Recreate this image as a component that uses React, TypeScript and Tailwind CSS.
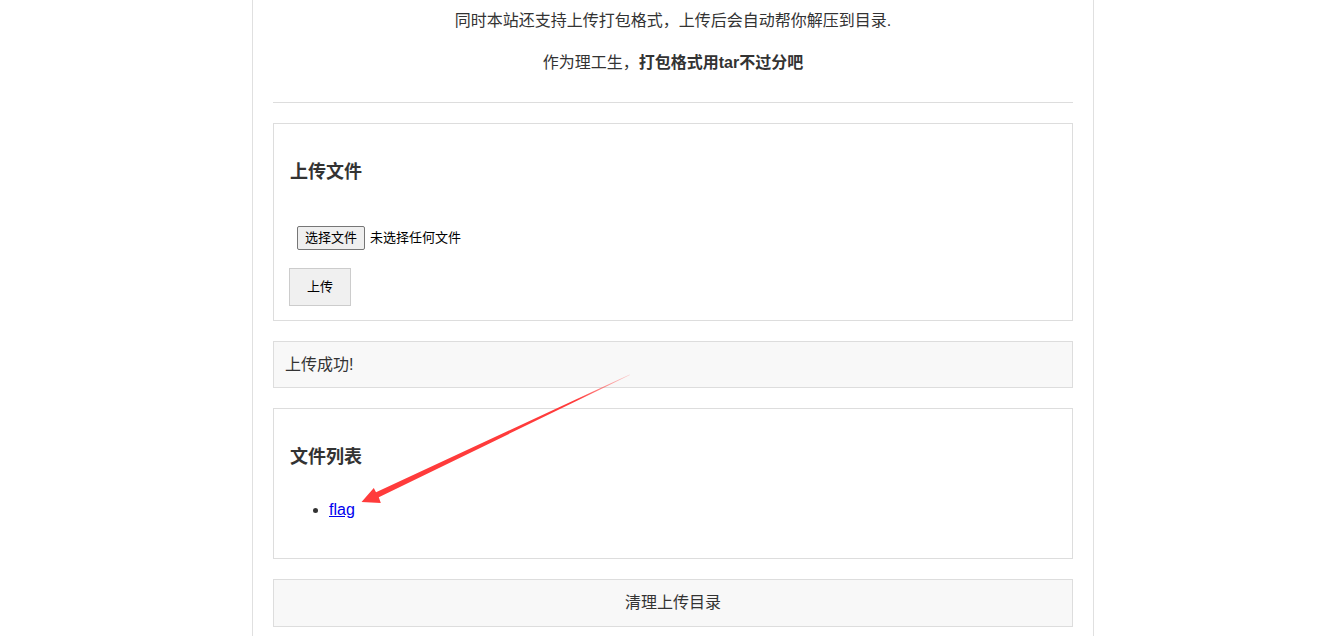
import React from "react";

const font = { fontFamily: '"Liberation Sans", "Noto Sans CJK SC", sans-serif' };

export default function App() {
  return (
    <div className="relative min-h-[636px] bg-white text-[#333]" style={font}>
      <div className="ml-[252px] w-[842px] min-h-[636px] border-x border-[#e0e0e0] px-5 pt-2 pb-5">
        <p className="text-center text-[16px] leading-[26px] mb-4">
          同时本站还支持上传打包格式，上传后会自动帮你解压到目录.
        </p>
        <p className="text-center text-[16px] leading-[26px]">
          作为理工生，<b>打包格式用tar不过分吧</b>
        </p>
        <hr className="mt-[26px] border-t border-[#ddd]" />

        <div className="mt-5 border border-[#ddd] px-4 pt-4 pb-[14px]">
          <h3 className="mt-[19px] text-[18px] leading-[26px] font-bold">上传文件</h3>
          <div className="mt-[41px] ml-[7px] flex items-center h-[24px]">
            <span className="h-[24px] px-[7px] flex items-center border border-[#767676] rounded-[2px] bg-[#efefef] text-[13px] text-black">
              选择文件
            </span>
            <span className="ml-[5px] text-[13px] text-black">未选择任何文件</span>
          </div>
          <div className="mt-[18px] -ml-px w-[62px] h-[38px] flex items-center justify-center border border-[#ccc] bg-[#f0f0f0] text-[13px] text-black">
            上传
          </div>
        </div>

        <div className="mt-5 border border-[#ddd] bg-[#f8f8f8] pl-[11px] pr-3 py-[10px] text-[16px] leading-[25px]">
          上传成功!
        </div>

        <div className="mt-5 border border-[#ddd] px-4 pt-4 pb-[36px]">
          <h3 className="mt-[19px] text-[18px] leading-[26px] font-bold">文件列表</h3>
          <ul className="mt-[28px] list-disc pl-[39px]">
            <li className="text-[16px] leading-[24px]">
              <a href="#" className="text-[#0000ee] underline">flag</a>
            </li>
          </ul>
        </div>

        <div className="mt-5 border border-[#ddd] bg-[#f8f8f8] py-[10px] text-center text-[16px] leading-[26px]">
          清理上传目录
        </div>
      </div>

      <svg className="absolute left-0 top-0 pointer-events-none" width="1339" height="636">
        <defs>
          <linearGradient id="ag" x1="630" y1="375" x2="362" y2="502" gradientUnits="userSpaceOnUse">
            <stop offset="0" stopColor="#ff3b3b" stopOpacity="0.2" />
            <stop offset="0.2" stopColor="#ff3b3b" stopOpacity="1" />
            <stop offset="1" stopColor="#ff3b3b" stopOpacity="1" />
          </linearGradient>
        </defs>
        <polygon
          points="630,375 378.8,497.2 380.8,503 361.5,502 373.8,488 376,492.2 629.6,374.6"
          fill="url(#ag)"
        />
      </svg>
    </div>
  );
}
